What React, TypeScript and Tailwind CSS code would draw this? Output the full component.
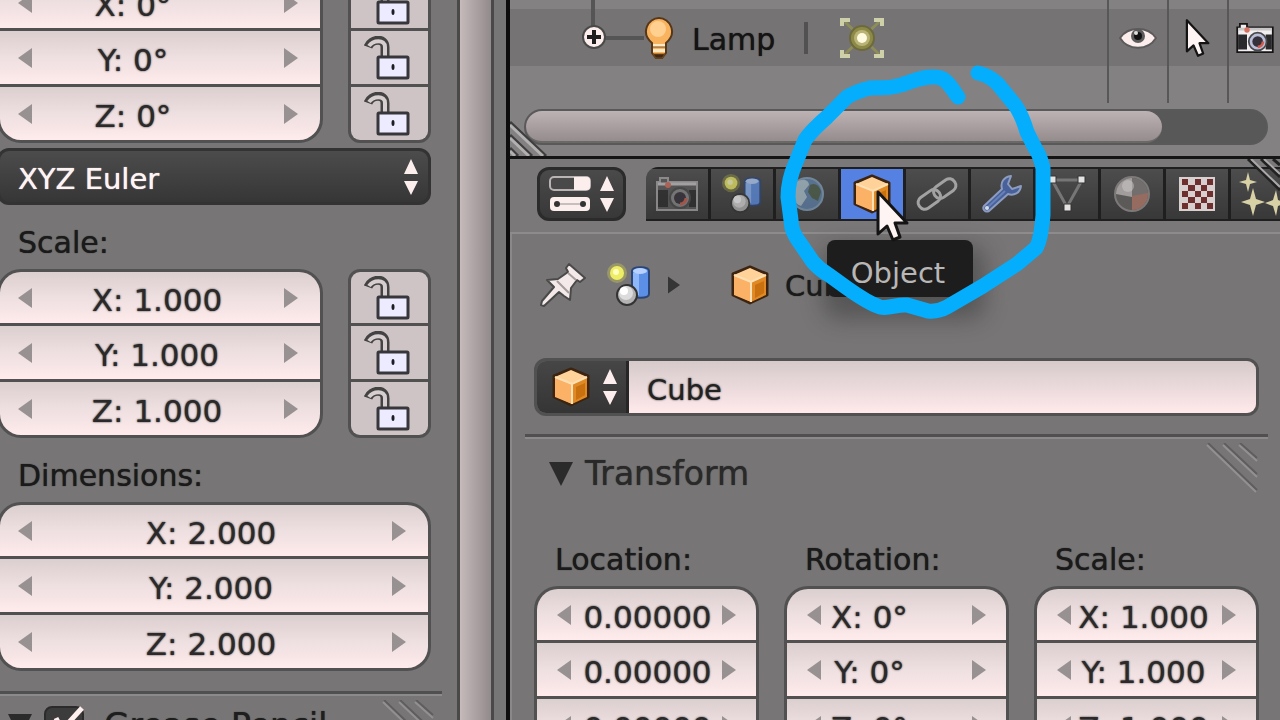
import { useState } from 'react'
import type { ReactNode } from 'react'

type NumberFieldProps = {
  label: string
  value: string
  compact?: boolean
}

const rotation = ['X: 0°', 'Y: 0°', 'Z: 0°']
const scale = ['X: 1.000', 'Y: 1.000', 'Z: 1.000']
const dimensions = ['X: 2.000', 'Y: 2.000', 'Z: 2.000']
const location = ['0.00000', '0.00000', '0.00000']

function Triangle({ className, points }: { className: string; points: string }) {
  return (
    <svg viewBox="0 0 14 20" className={className} aria-hidden="true">
      <polygon points={points} fill="currentColor" />
    </svg>
  )
}

function UpDown() {
  return (
    <svg viewBox="0 0 16 38" className="h-[38px] w-4 shrink-0" aria-hidden="true">
      <path d="M8 1 15 16H1ZM8 37 1 23h14Z" fill="#fdeeee" />
    </svg>
  )
}

function LockIcon() {
  return (
    <svg viewBox="0 0 46 44" className="h-11 w-[46px]" fill="none" aria-hidden="true">
      <path d="M4 11C7 3 21 1 21 11v12" stroke="#444343" strokeWidth="9" />
      <path d="M5 10C9 4 21 3 21 11v12" stroke="#d6cecf" strokeWidth="4" />
      <rect x="14" y="21" width="30" height="21" rx="1" fill="#ecebff" stroke="#37373b" strokeWidth="3" />
      <ellipse cx="29" cy="31" rx="1.5" ry="3" fill="#1c1c22" />
    </svg>
  )
}

function CubeIcon() {
  return (
    <svg viewBox="0 0 38 40" className="h-10 w-[38px] shrink-0" aria-hidden="true">
      <path d="M19 2 36 9v21L19 38 2 30V9Z" fill="#ef9a3c" stroke="#3c2410" strokeWidth="3" strokeLinejoin="round" />
      <path d="M19 3 35 10 20 17 3 10Z" fill="#ffd29a" />
      <path d="M3 10 20 17v20L3 30Z" fill="#fbb266" />
      <path d="M20 17 35 10v20L20 37Z" fill="#e08a26" />
      <path d="M24 20 33 16v12l-9 5Z" fill="#c9700f" />
      <path d="M3 10 20 17 35 10M20 17v20" fill="none" stroke="#ffe0b4" strokeWidth="2" />
    </svg>
  )
}

function SceneIcon({ dim }: { dim?: boolean }) {
  return (
    <svg viewBox="0 0 46 46" className={dim ? 'size-[42px] opacity-70' : 'size-[46px] shrink-0'} aria-hidden="true">
      <circle cx="11" cy="11" r="10" fill="#e8e84a" opacity=".3" />
      <circle cx="11" cy="11" r="7" fill="#eeee66" />
      <circle cx="10" cy="10" r="3" fill="#ffffc0" />
      <path d="M26 9c0-5 17-5 17 0v23c0 5-17 5-17 0Z" fill="#5c90e6" stroke="#2c4577" strokeWidth="2" />
      <path d="M30 11v22" stroke="#8fb8fb" strokeWidth="6" />
      <ellipse cx="34" cy="9" rx="7" ry="3" fill="#b7d2ff" />
      <circle cx="21" cy="33" r="10" fill="#b5b4b4" stroke="#333" strokeWidth="2" />
      <circle cx="20" cy="31" r="7" fill="#dddcdc" />
      <circle cx="18" cy="29" r="4" fill="#fff" />
    </svg>
  )
}

function CameraIcon({ bright }: { bright?: boolean }) {
  return (
    <svg viewBox="0 0 44 36" className={bright ? 'h-8 w-10' : 'h-9 w-11 opacity-70'} aria-hidden="true">
      <path d="M2 6h3V2h8v4h29v28H2Z" fill={bright ? '#f3eef0' : '#5d5c5c'} stroke={bright ? '#151515' : '#a8a6a6'} strokeWidth="2" />
      <path d="M3 14h10v17H3zM34 14h7v17h-7z" fill={bright ? '#2a2a2c' : '#2c2c2c'} />
      <path d="M3 8h38" stroke="#c9c6c6" strokeWidth="3" />
      <circle cx="13" cy="9" r="3" fill="#d8705f" />
      <circle cx="25" cy="22" r="10" fill={bright ? '#b9bfd8' : '#8c8a8a'} stroke="#4a4a4c" strokeWidth="2" />
      <circle cx="25" cy="22" r="6" fill="#34313a" />
      <path d="M25 28a6 6 0 0 0 6-6" stroke="#cf5e50" strokeWidth="3" fill="none" />
    </svg>
  )
}

function PinIcon() {
  return (
    <svg viewBox="0 0 48 46" className="h-[46px] w-12 shrink-0" aria-hidden="true">
      <path
        d="M30 2 46 16 41 20 38 18 32 26 31 38 25 34 20 30 5 44 2 43 3 39 15 25 8 18 19 17 29 10 27 6Z"
        fill="#f5eaea"
        stroke="#4a4949"
        strokeWidth="2"
        strokeLinejoin="round"
      />
      <path d="m29 11 8 7M18 19l12 12" stroke="#a69d9d" strokeWidth="2" />
    </svg>
  )
}

function WorldIcon() {
  return (
    <svg viewBox="0 0 36 36" className="size-9 opacity-75" aria-hidden="true">
      <circle cx="18" cy="18" r="16" fill="#5e7fa6" stroke="#7f9cb5" strokeWidth="2" />
      <path d="M6 7c8-6 14-3 14 2l-5 6 3 6-6 9C4 27 2 19 3 13Z" fill="#a9bfcb" />
      <path d="M21 9c6-3 10 2 11 7l-3 9-6-3-4-6Z" fill="#4d5f4b" />
    </svg>
  )
}

function ChainIcon() {
  return (
    <svg viewBox="0 0 44 36" className="h-9 w-11" fill="none" stroke="#a3a2a2" strokeWidth="3" aria-hidden="true">
      <rect x="2" y="17" width="24" height="13" rx="6" transform="rotate(-35 14 23)" />
      <rect x="18" y="6" width="24" height="13" rx="6" transform="rotate(-35 30 13)" />
    </svg>
  )
}

function WrenchIcon() {
  return (
    <svg viewBox="0 0 42 40" className="h-10 w-[42px]" aria-hidden="true">
      <path
        d="M3 32 21 15C19 8 23 3 30 2l-3 8 4 5 9-3c-1 7-7 10-13 8L8 37c-4 2-7-2-5-5Z"
        fill="#48619a"
        stroke="#8b9cc0"
        strokeWidth="2"
        strokeLinejoin="round"
      />
      <path d="M7 33 24 17" stroke="#6581b8" strokeWidth="2" />
      <circle cx="6" cy="34" r="2" fill="#d5dbe8" />
    </svg>
  )
}

function MeshIcon() {
  return (
    <svg viewBox="0 0 40 40" className="size-10" aria-hidden="true">
      <path d="M5 6h30L20 33Z" fill="none" stroke="#777676" strokeWidth="3" />
      <path d="M2 2h7v7H2zM31 2h7v7h-7zM17 30h7v7h-7z" fill="#e5e2e2" stroke="#333" />
    </svg>
  )
}

function MaterialIcon() {
  return (
    <svg viewBox="0 0 38 38" className="size-[38px]" aria-hidden="true">
      <circle cx="19" cy="19" r="17" fill="#5c5959" stroke="#7d7979" strokeWidth="2" />
      <path d="M19 3A16 16 0 0 0 3 19l16 3Z" fill="#a19d9d" />
      <path d="M19 3a16 16 0 0 1 16 16l-16 3Z" fill="#726e6d" />
      <path d="M19 21 35 18a16 16 0 0 1-16 17Z" fill="#966c60" />
      <circle cx="15" cy="11" r="6" fill="#cfcaca" opacity=".5" />
    </svg>
  )
}

function TextureIcon() {
  return (
    <svg viewBox="0 0 36 34" className="h-[34px] w-9" aria-hidden="true">
      <path d="M0 0h36v34H0z" fill="#d8cfcf" />
      <path
        d="M3 2h6v6H3zM16 2h6v6h-6zM28 2h6v6h-6zM9 8h7v6H9zM22 8h6v6h-6zM3 14h6v6H3zM16 14h6v6h-6zM28 14h6v6h-6zM9 20h7v6H9zM22 20h6v6h-6zM3 26h6v6H3zM16 26h6v6h-6zM28 26h6v6h-6z"
        fill="#6e2f2f"
      />
    </svg>
  )
}

function ParticlesIcon() {
  return (
    <svg viewBox="0 0 52 46" className="h-[46px] w-[52px]" aria-hidden="true">
      <path
        d="m12 1 2 8 7 2-7 2-2 8-2-8-7-2 7-2ZM17 17l3 11 9 3-9 3-3 11-3-11-9-3 9-3ZM40 19l2 10 8 3-8 3-2 10-3-10-8-3 8-3Z"
        fill="#d9d1a6"
      />
    </svg>
  )
}

function PropertiesIcon() {
  return (
    <svg viewBox="0 0 42 36" className="h-9 w-[42px]" aria-hidden="true">
      <rect x="1" y="1" width="40" height="13" rx="4" fill="#4a4949" stroke="#b9b3b3" strokeWidth="2" />
      <path d="M25 1h13q3 0 3 3v7q0 3-3 3H25Z" fill="#fdeeee" />
      <rect x="1" y="21" width="40" height="14" rx="4" fill="#fdeeee" />
      <path d="M11 28h20" stroke="#c7bebe" strokeWidth="2" />
      <circle cx="8" cy="28" r="3" fill="#333" />
      <circle cx="34" cy="28" r="3" fill="#333" />
    </svg>
  )
}

function BulbIcon() {
  return (
    <svg viewBox="0 0 30 44" className="h-11 w-[30px] shrink-0" aria-hidden="true">
      <path d="M8 27C-4 17 4 2 15 2s19 15 7 25v10l-4 5h-6l-4-5Z" fill="#f9b35f" stroke="#55371a" strokeWidth="2" />
      <circle cx="14" cy="13" r="8" fill="#ffd08f" />
      <path d="M9 28h12v3H9zM9 33h12v3H9z" fill="#ffe8c4" />
      <path d="M9 31h12M9 38h12l-3 4h-6Z" fill="#3a2714" stroke="#7a4a18" />
    </svg>
  )
}

function LampDataIcon() {
  return (
    <svg viewBox="0 0 46 44" className="h-11 w-[46px] shrink-0" aria-hidden="true">
      <path d="m6 6 34 32M40 6 6 38" stroke="#8e8c58" strokeWidth="3" />
      <path d="M3 10V4h8M35 4h8v6M3 34v6h8M35 40h8v-6" fill="none" stroke="#cdd0a8" strokeWidth="4" />
      <circle cx="23" cy="22" r="12" fill="#8d8a48" stroke="#6c6a3c" strokeWidth="2" />
      <circle cx="23" cy="22" r="8" fill="#b9b476" />
      <circle cx="23" cy="22" r="5" fill="#fffbe0" />
    </svg>
  )
}

function Pointer({ className }: { className: string }) {
  return (
    <svg viewBox="0 0 34 54" className={className} aria-hidden="true">
      <path
        d="M2 3v42l9-8 6 14 7-3-5-14h12Z"
        fill="#fff4f4"
        stroke="#141414"
        strokeWidth="3"
        strokeLinejoin="round"
      />
    </svg>
  )
}

function Grip({ className }: { className: string }) {
  return (
    <svg viewBox="0 0 52 50" className={className} fill="none" strokeWidth="2" aria-hidden="true">
      <path d="m2 0 49 47M18 0l33 31M34 0l17 15" stroke="#5f5d5d" />
      <path d="m1 2 49 47M17 2l34 32M33 2l18 16" stroke="#929090" />
    </svg>
  )
}

function getShift(value: string) {
  if (value.includes('°')) return 'pr-[54px]'
  return value.includes(':') ? 'pr-[6px]' : 'pl-[2px]'
}

function NumberField({ label, value, compact }: NumberFieldProps) {
  const [text, setText] = useState(value)

  return (
    <div className="relative h-[53px] bg-linear-to-b from-[#dccfd0] via-[#eedfe0] to-[#ffebec] first:h-[51px]">
      <input
        aria-label={label}
        value={text}
        onChange={(event) => setText(event.target.value)}
        className={`size-full bg-transparent pt-1 text-center text-[31px] text-[#2b2929] outline-none text-shadow-[0_0_2px_#2b2929] ${getShift(value)}`}
      />
      <button
        type="button"
        aria-label={`Decrease ${label}`}
        className={`absolute inset-y-0 flex items-center text-[#989192] ${compact ? 'left-5' : 'left-[18px]'}`}
      >
        <Triangle points="14,0 14,20 0,10" className="h-5 w-[14px]" />
      </button>
      <button
        type="button"
        aria-label={`Increase ${label}`}
        className={`absolute inset-y-0 flex items-center text-[#989192] ${compact ? 'right-5' : 'right-[22px]'}`}
      >
        <Triangle points="0,0 0,20 14,10" className="h-5 w-[14px]" />
      </button>
    </div>
  )
}

function NumberGroup({ name, values, compact }: { name: string; values: string[]; compact?: boolean }) {
  return (
    <div className="flex min-w-0 flex-1 flex-col gap-[3px] overflow-hidden rounded-3xl border-3 border-[#525151] bg-[#525151]">
      {values.map((value, index) => (
        <NumberField key={index} label={`${name} ${'XYZ'[index]}`} value={value} compact={compact} />
      ))}
    </div>
  )
}

function LockGroup({ name }: { name: string }) {
  return (
    <div className="flex w-[83px] shrink-0 flex-col gap-[3px] overflow-hidden rounded-xl border-3 border-[#525151] bg-[#525151]">
      {['X', 'Y', 'Z'].map((axis) => (
        <button
          key={axis}
          type="button"
          aria-label={`Lock ${name} ${axis}`}
          className="flex h-[53px] items-center justify-center bg-[#cfc4c5] pr-[6px] first:h-[51px]"
        >
          <LockIcon />
        </button>
      ))}
    </div>
  )
}

function GroupLabel({ children }: { children: ReactNode }) {
  return (
    <p className="mb-2 h-9 pl-[21px] text-[30px] leading-9 text-[#1b1a1a] text-shadow-[0_0_1px_#1b1a1a]">{children}</p>
  )
}

function Rule() {
  return <div className="h-[5px] shrink-0 border-t-3 border-b-2 border-t-[#515050] border-b-[#8c8a8a]" />
}

function TransformSidebar() {
  return (
    <aside className="flex h-full w-[510px] shrink-0 overflow-hidden">
      <div className="min-w-0 flex-1">
        <div className="-mt-[26px] -ml-[3px] pr-[26px]">
          <div className="flex gap-[25px]">
            <NumberGroup name="Rotation" values={rotation} />
            <LockGroup name="rotation" />
          </div>

          <div className="relative mt-[5px]">
            <select
              aria-label="Rotation mode"
              className="h-[57px] w-full appearance-none rounded-xl border-3 border-[#333] bg-linear-to-b from-[#4d4c4c] to-[#363636] pt-[7px] pl-[18px] text-[29px] text-[#fff4f4] outline-none text-shadow-[0_0_1px_#fff4f4]"
            >
              <option>XYZ Euler</option>
            </select>
            <div className="pointer-events-none absolute inset-y-0 right-3 flex items-center">
              <UpDown />
            </div>
          </div>

          <div className="mt-5">
            <GroupLabel>Scale:</GroupLabel>
            <div className="flex gap-[25px]">
              <NumberGroup name="Scale" values={scale} />
              <LockGroup name="scale" />
            </div>
          </div>

          <div className="mt-5">
            <GroupLabel>Dimensions:</GroupLabel>
            <div className="flex">
              <NumberGroup name="Dimensions" values={dimensions} />
            </div>
          </div>
        </div>

        <div className="mt-5 mr-[15px]">
          <Rule />
          <div className="relative flex h-[60px] items-center pl-2 text-[33px] text-[#1f1e1e] text-shadow-[0_0_1px_#1f1e1e]">
            <svg viewBox="0 0 24 24" className="size-6" aria-hidden="true">
              <path d="M0 0h24L12 24Z" fill="#2c2b2b" />
            </svg>
            <label className="flex items-center">
              <span className="relative mr-5 ml-3 block size-10">
                <input
                  type="checkbox"
                  defaultChecked
                  className="size-10 appearance-none rounded-lg border-2 border-[#2b2b2b] bg-[#3d3c3c]"
                />
                <svg viewBox="0 0 40 40" className="pointer-events-none absolute inset-0" aria-hidden="true">
                  <path d="m12 12 6 12L38 2" fill="none" stroke="#fff0f0" strokeWidth="5" />
                </svg>
              </span>
              Grease Pencil
            </label>
            <Grip className="absolute top-1 right-2 h-[50px] w-[52px]" />
          </div>
        </div>
      </div>

      <div className="w-[37px] border-x-3 border-[#4a4949] bg-linear-to-r from-[#c6babb] to-[#938a8b]" />
      <div className="w-[12px] bg-[#777676]" />
      <div className="w-1 bg-[#0d0d0d]" />
    </aside>
  )
}

function OutlinerColumn({ label, children, className }: { label: string; children: ReactNode; className: string }) {
  return (
    <div className={`h-full shrink-0 border-l-2 border-[#595858] pt-[9px] ${className}`}>
      <button type="button" aria-label={label} className="flex h-[57px] w-full items-center justify-center bg-[#757373]">
        {children}
      </button>
    </div>
  )
}

function Outliner() {
  return (
    <div className="relative border-b-3 border-[#151515] bg-[#838181] pb-[11px]">
      <div className="flex h-[103px]">
        <div className="min-w-0 flex-1 pt-[9px]">
          <div className="relative flex h-[57px] items-center bg-[#757373] pl-[70px]">
            <svg viewBox="0 0 64 66" className="-mt-[9px] h-[66px] w-16 shrink-0" fill="none" aria-hidden="true">
              <path d="M13 0v38h51" stroke="#565555" strokeWidth="4" />
              <circle cx="14" cy="37" r="11" fill="#fdeeee" stroke="#4a4949" strokeWidth="2" />
              <path d="M14 30v14M7 37h14" stroke="#1f1e1e" strokeWidth="4" />
            </svg>
            <BulbIcon />
            <span className="ml-[18px] pt-1 text-[30px] leading-9 text-[#151414] text-shadow-[0_0_1px_#151414]">Lamp</span>
            <span className="ml-[29px] h-8 w-1 bg-[#525151]" />
            <span className="ml-[31px]">
              <LampDataIcon />
            </span>
          </div>
        </div>
        <OutlinerColumn label="Visible" className="w-[60px]">
          <svg viewBox="0 0 40 24" className="h-6 w-10" aria-hidden="true">
            <path d="M2 12C10 0 30 0 38 12 30 25 10 25 2 12Z" fill="#fdeeee" stroke="#5c5a5a" strokeWidth="2" />
            <circle cx="20" cy="10" r="7" fill="#5c5b5b" />
            <circle cx="20" cy="10" r="4" fill="#111" />
            <circle cx="18" cy="7" r="2" fill="#ddd" />
          </svg>
        </OutlinerColumn>
        <OutlinerColumn label="Selectable" className="w-[60px]">
          <Pointer className="h-10 w-[26px]" />
        </OutlinerColumn>
        <OutlinerColumn label="Renderable" className="w-[53px]">
          <CameraIcon bright />
        </OutlinerColumn>
      </div>

      <div className="mt-[6px] mr-3 ml-[14px] h-9 rounded-full border-2 border-[#5a5959] bg-[#595858]">
        <div className="h-full w-[86%] rounded-full border-b-2 border-[#6b6868] bg-linear-to-b from-[#beb3b4] to-[#958c8d]" />
      </div>

      <svg viewBox="0 0 38 37" className="absolute bottom-0 left-0 h-[37px] w-[38px]" fill="none" aria-hidden="true">
        <path d="m0 3 36 34M0 16l22 21M0 29l8 8" stroke="#3f3e3e" strokeWidth="3" />
        <path d="m0 6 33 31M0 19l19 18M0 32l5 5" stroke="#b3b0b0" strokeWidth="3" />
      </svg>
    </div>
  )
}

function Tab({ label, active, children }: { label: string; active?: boolean; children: ReactNode }) {
  return (
    <div className="relative shrink-0">
      <button
        type="button"
        aria-label={label}
        className={`flex h-[54px] w-[65px] items-center justify-center border-y-2 border-r-3 border-[#1f1f1f] ${
          active ? 'bg-[#5581e2]' : 'bg-linear-to-b from-[#4e4d4d] to-[#383838]'
        }`}
      >
        {children}
      </button>
      {active ? (
        <>
          <div
            role="tooltip"
            className="absolute top-[73px] -left-[14px] flex h-[57px] w-[146px] items-center justify-center rounded-lg bg-[#1d1d1d] pt-[10px] pr-1 text-[29px] text-[#b9b6b6] shadow-[4px_14px_22px_8px_rgba(40,40,40,0.4)]"
          >
            {label}
          </div>
          <Pointer className="absolute top-[22px] left-[35px] h-[54px] w-[34px]" />
        </>
      ) : null}
    </div>
  )
}

function PropertiesHeader() {
  return (
    <div className="relative z-10 flex h-[75px] gap-5 border-b-2 border-[#8d8b8b] bg-[#7a7878] pt-2 pl-[27px]">
      <button
        type="button"
        aria-label="Editor type"
        className="flex h-[54px] w-[89px] shrink-0 items-center justify-center gap-2 rounded-xl border-3 border-[#2b2b2b] bg-linear-to-b from-[#4b4a4a] to-[#383838]"
      >
        <PropertiesIcon />
        <UpDown />
      </button>
      <div className="flex rounded-l-xl *:first:overflow-hidden *:first:rounded-l-xl">
        <Tab label="Render">
          <CameraIcon />
        </Tab>
        <Tab label="Scene">
          <SceneIcon dim />
        </Tab>
        <Tab label="World">
          <WorldIcon />
        </Tab>
        <Tab label="Object" active>
          <CubeIcon />
        </Tab>
        <Tab label="Constraints">
          <ChainIcon />
        </Tab>
        <Tab label="Modifiers">
          <WrenchIcon />
        </Tab>
        <Tab label="Object Data">
          <MeshIcon />
        </Tab>
        <Tab label="Material">
          <MaterialIcon />
        </Tab>
        <Tab label="Texture">
          <TextureIcon />
        </Tab>
        <Tab label="Particles">
          <ParticlesIcon />
        </Tab>
      </div>
      <svg viewBox="0 0 34 32" className="absolute top-0 right-0 h-8 w-[34px]" fill="none" aria-hidden="true">
        <path d="m2 0 32 31M15 0l19 18M27 0l7 6" stroke="#222" strokeWidth="3" />
        <path d="m5 0 29 28M18 0l16 15" stroke="#aaa8a8" strokeWidth="2" />
      </svg>
    </div>
  )
}

function TransformColumn({ name, values }: { name: string; values: string[] }) {
  return (
    <div>
      <GroupLabel>{name}:</GroupLabel>
      <NumberGroup name={`Object ${name}`} values={values} compact />
    </div>
  )
}

function ObjectProperties() {
  const [name, setName] = useState('Cube')

  return (
    <div className="border-l-2 border-[#8a8888]">
      <nav aria-label="Context" className="flex h-[102px] items-center pl-[27px]">
        <PinIcon />
        <span className="ml-[19px]">
          <SceneIcon />
        </span>
        <Triangle points="0,0 0,20 14,10" className="ml-4 h-5 w-3 text-[#363535]" />
        <span className="ml-[51px]">
          <CubeIcon />
        </span>
        <span className="ml-4 pt-1 text-[29px] text-[#1b1a1a] text-shadow-[0_0_1px_#1b1a1a]">Cube</span>
      </nav>

      <div className="mt-[22px] mr-[21px] ml-[22px] flex h-[58px] overflow-hidden rounded-xl border-3 border-[#525151]">
        <button
          type="button"
          aria-label="Browse objects"
          className="flex w-[92px] shrink-0 items-center justify-end gap-3 border-r-3 border-[#262626] bg-linear-to-b from-[#474646] to-[#353535] pr-2"
        >
          <CubeIcon />
          <UpDown />
        </button>
        <input
          aria-label="Object name"
          value={name}
          onChange={(event) => setName(event.target.value)}
          className="min-w-0 flex-1 bg-linear-to-b from-[#d6cacb] to-[#ffe9eb] pt-[7px] pl-[18px] text-[29px] text-[#232222] outline-none text-shadow-[0_0_2px_#2b2929]"
        />
      </div>

      <div className="mt-[18px] mr-3 ml-[13px]">
        <Rule />
      </div>

      <section>
        <div className="relative flex h-[70px] items-center">
          <button
            type="button"
            className="flex items-center gap-3 pl-[37px] text-[33px] text-[#2a2929] text-shadow-[0_0_1px_#2a2929]"
          >
            <svg viewBox="0 0 24 24" className="size-6" aria-hidden="true">
              <path d="M0 0h24L12 24Z" fill="#2c2b2b" />
            </svg>
            Transform
          </button>
          <Grip className="absolute top-1 right-[22px] h-[50px] w-[52px]" />
        </div>
        <div className="mt-[33px] mr-[21px] ml-[22px] grid grid-cols-3 gap-[25px]">
          <TransformColumn name="Location" values={location} />
          <TransformColumn name="Rotation" values={rotation} />
          <TransformColumn name="Scale" values={scale} />
        </div>
      </section>
    </div>
  )
}

function Annotation() {
  return (
    <svg viewBox="780 60 275 265" className="pointer-events-none absolute top-[60px] left-[270px] z-20 h-[265px] w-[275px]" aria-hidden="true">
      <path
        d="M958 97C949 84 945 77 935 77C920 76 910 83 897 86C885 89 880 87 870 88Q857 91 847 97L827 117Q811 131 805 140L796 162Q788 180 788 197L792 228Q794 235 800 243L813 262Q820 270 829 275L847 288Q868 303 880 307C890 309 897 304 907 305L928 311Q938 312 947 307L983 286 1017 264 1036 248Q1041 240 1043 215L1043 168Q1040 155 1035 148L1027 132Q1022 115 1015 105L997 83Q988 75 978 73"
        fill="none"
        stroke="#05aefc"
        strokeWidth="15"
        strokeLinecap="round"
        strokeLinejoin="round"
      />
    </svg>
  )
}

export default function App() {
  return (
    <main className="flex h-screen overflow-hidden bg-[#777575] font-['DejaVu_Sans',sans-serif]">
      <TransformSidebar />
      <div className="relative min-w-0 flex-1 overflow-hidden">
        <Outliner />
        <PropertiesHeader />
        <ObjectProperties />
        <Annotation />
      </div>
    </main>
  )
}
